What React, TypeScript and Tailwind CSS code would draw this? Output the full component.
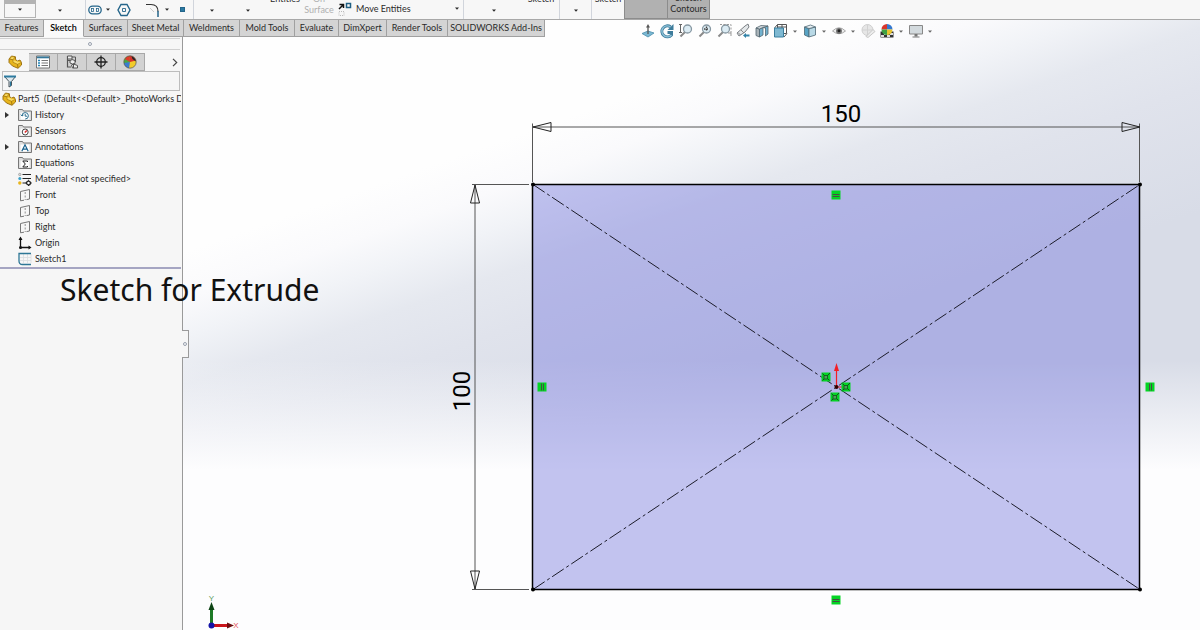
import React from "react";
import clsx from "clsx";

const tabs = [
  { name: "Features", width: "w-11" },
  { name: "Sketch", width: "w-10" },
  { name: "Surfaces", width: "w-11" },
  { name: "Sheet Metal", width: "w-14" },
  { name: "Weldments", width: "w-14" },
  { name: "Mold Tools", width: "w-[55px]" },
  { name: "Evaluate", width: "w-11" },
  { name: "DimXpert", width: "w-12" },
  { name: "Render Tools", width: "w-[61px]" },
  { name: "SOLIDWORKS Add-Ins", width: "w-[97px]" },
];

const Caret: React.FC<{ label: string; className?: string }> = ({ label, className }) => (
  <button type="button" aria-label={label} className={clsx("flex items-center justify-center shrink-0", className || "w-2 h-4")}>
    <svg width="4" height="3" viewBox="0 0 4 3"><path d="M0 0.5h4L2 2.8z" fill="currentColor" /></svg>
  </button>
);

const PartIcon = () => (
  <svg width="14" height="14" viewBox="0 0 14 14">
    <path d="M1 4 3.500 1l4 .8v2.700L9.500 6 12 5l1.500 2.500V10L10 13.300 4.500 11 1 7.500z" fill="#e8b51c" stroke="#94690a" strokeWidth=".9" />
    <path d="M1.500 4 3.800 1.500l3 .6L5 4.800v2.500l4.500 2L13 7.500" fill="#fbdc62" stroke="#a87c0e" strokeWidth=".7" />
    <path d="m9.500 9.300.5 3.500M5 4.800 1.500 4" stroke="#94690a" strokeWidth=".8" />
  </svg>
);

const BallIcon: React.FC<{ size: number }> = ({ size }) => (
  <svg width={size} height={size} viewBox="0 0 14 14">
    <circle cx="7" cy="7" r="6.200" fill="#f2cb2a" />
    <path d="M7 7 1.500 9.500A6.200 6.200 0 0 1 6 .9z" fill="#4aa843" />
    <path d="M7 7 6 .9A6.200 6.200 0 0 0 1.800 4z" fill="#e33a2b" />
    <path d="M7 7 6 .9a6.200 6.200 0 0 1 7 4.600z" fill="#d6332a" />
    <path d="M8.500 1.200a6.200 6.200 0 0 1 4.500 5.300L9.500 4z" fill="#222" />
    <path d="M7 7 1 8a6.200 6.200 0 0 0 5 5.200z" fill="#3b7bd0" />
    <circle cx="7" cy="7" r="6.200" fill="none" stroke="#555" strokeWidth=".7" />
  </svg>
);

const Folder: React.FC<{ children: React.ReactNode }> = ({ children }) => (
  <svg width="14" height="14" viewBox="0 0 14 14">
    <path d="M.5 12.500v-11h4l1 1.500h8v9.500z" fill="#dedede" stroke="#777" />
    <path d="M2.500 4.500h9v7h-9z" fill="#fff" />
    {children}
  </svg>
);

const PlaneIcon = () => (
  <svg width="14" height="14" viewBox="0 0 14 14" fill="none" stroke="#777">
    <path d="M2.500 3.500 11.500 1.500v9.500l-3 .6M6 12.200l-3.500.6V3.500" />
    <path d="M7.200 4v8" strokeWidth=".8" strokeDasharray="2 1.500" />
  </svg>
);

const tree = [
  {
    name: "History", open: true,
    icon: <Folder><path d="M4 8a3.200 3.200 0 1 1 3.200 3M4 8 2.800 6.700M4 8l1.500-1M7.200 6v2.200h2" fill="none" stroke="#2c6f91" /></Folder>,
  },
  {
    name: "Sensors",
    icon: <Folder><circle cx="7.200" cy="8" r="3" fill="#fff" stroke="#444" /><path d="m6.800 8.400 2-2" stroke="#d22" strokeWidth="1.400" /></Folder>,
  },
  {
    name: "Annotations", open: true,
    icon: <Folder><path d="M3.800 11.300 7 4.800l3.200 6.500M5 9.200h4" fill="none" stroke="#17618e" strokeWidth="1.200" /></Folder>,
  },
  {
    name: "Equations",
    icon: <Folder><path d="M9.500 6V5H4.800L7.300 8l-2.500 3h4.700v-1" fill="none" stroke="#222" /></Folder>,
  },
  {
    name: "Material <not specified>",
    icon: (
      <svg width="14" height="14" viewBox="0 0 14 14">
        <path d="M4.500 2.500H13M4.500 6.500H13M4.500 11H8" stroke="#222" strokeWidth="1.200" />
        <circle cx="1.800" cy="2.500" r="1.200" fill="#ddd" stroke="#888" strokeWidth=".6" />
        <circle cx="1.800" cy="6.500" r="1.500" fill="#3aa0c8" />
        <circle cx="1.800" cy="11" r="1.700" fill="#e8b51c" />
        <circle cx="10.500" cy="11" r="1.900" fill="#fff" stroke="#222" strokeWidth="1.300" />
        <path d="M10.500 7.800v1M10.500 13v1M7.500 11h1M12.600 11h1.200" stroke="#222" />
      </svg>
    ),
  },
  { name: "Front", icon: <PlaneIcon /> },
  { name: "Top", icon: <PlaneIcon /> },
  { name: "Right", icon: <PlaneIcon /> },
  {
    name: "Origin",
    icon: (
      <svg width="14" height="14" viewBox="0 0 14 14">
        <path d="M2.500 2v9.500H12" fill="none" stroke="#111" strokeWidth="1.300" />
        <path d="M.5 4 2.500.5l2 3.500zM10.500 9.500l3 2-3 2z" fill="#111" />
        <circle cx="2.500" cy="11.500" r="1.500" fill="#111" />
      </svg>
    ),
  },
  {
    name: "Sketch1",
    icon: (
      <svg width="14" height="14" viewBox="0 0 14 14" fill="none">
        <path d="M5.500 2v9M9.500 2v9M2 5.500h11M2 8.500h11M13 2v9" stroke="#d9dde0" strokeWidth=".8" />
        <path d="M13 1.500H1v7.500q0 3.500 3.500 3.500H13" stroke="#2e7796" strokeWidth="1.300" />
      </svg>
    ),
  },
];

const managerTabs = [
  { name: "FeatureManager", icon: <PartIcon /> },
  {
    name: "PropertyManager",
    icon: (
      <svg width="14" height="14" viewBox="0 0 14 14">
        <path d="M.5 1h13v12H.5z" fill="#fff" stroke="#777" />
        <path d="M1 1.500h12v1.800H1z" fill="#35789b" />
        <path d="M2 5.500h2M2 8h2M2 10.500h2" stroke="#2382b5" strokeWidth="1.500" />
        <path d="M5.500 5.500H12M5.500 8H12M5.500 10.500H12" stroke="#777" />
      </svg>
    ),
  },
  {
    name: "ConfigurationManager",
    icon: (
      <svg width="14" height="14" viewBox="0 0 14 14" fill="none" stroke="#555">
        <path d="M2.500 1v11.500M2.500 5.500H5M2.500 12H6" strokeWidth="1.200" />
        <path d="M2.500 1H7v3H2.500zM5 6l2-1.500 3 1v3L7.500 9 5 8zM6.500 10l2-1 4 1.500v2.500h-5z" fill="#eee" />
        <path d="M7 2h3.500v5M8.500 9v4" />
      </svg>
    ),
  },
  {
    name: "DimXpertManager",
    icon: (
      <svg width="14" height="14" viewBox="0 0 14 14" fill="none" stroke="#222" strokeWidth="1.300">
        <circle cx="7" cy="7" r="4.300" />
        <path d="M7 .5v13M.5 7h13" />
      </svg>
    ),
  },
  { name: "DisplayManager", icon: <BallIcon size={14} /> },
];

const Lens: React.FC<{ children?: React.ReactNode }> = ({ children }) => (
  <svg width="16" height="16" viewBox="0 0 16 16" fill="none">
    <path d="m7 9-4.500 4.500" stroke="#8a8a8a" strokeWidth="2" />
    <circle cx="9.500" cy="6" r="4" fill="#dcecf4" stroke="#8798a2" strokeWidth="1.300" />
    {children}
  </svg>
);

// view toolbar, "menu" puts a drop-down arrow after the icon
const viewTools = [
  {
    name: "Normal To",
    icon: (
      <svg width="16" height="16" viewBox="0 0 16 16">
        <path d="M2 10.500 8 8l6 2-6 4z" fill="#7bb9d4" stroke="#4a8dab" strokeWidth=".8" />
        <path d="M8 11V3" stroke="#555" strokeWidth="1.300" />
        <path d="m6 4.500 2-3.500 2 3.500z" fill="#555" />
      </svg>
    ),
  },
  {
    name: "Rotate",
    icon: (
      <svg width="16" height="16" viewBox="0 0 16 16" fill="none">
        <path d="M11.500 3.800A5.500 5.500 0 1 0 12.500 12V9.500H8.500" stroke="#3d7c9b" strokeWidth="3" />
        <path d="M11.500 3.800A5.500 5.500 0 1 0 12.500 12" stroke="#8cc1d8" strokeWidth="1.400" />
        <path d="M14.500 1v6h-6z" fill="#3d7c9b" />
      </svg>
    ),
  },
  { name: "Zoom Scale", icon: <Lens><path d="M2.500 1.500v8M1 1.500h3M1 9.500h3" stroke="#666" /></Lens> },
  { name: "Zoom to Fit", icon: <Lens><path d="M9.500 3.500v5M7 6h5" stroke="#444" strokeWidth="1.400" strokeDasharray="1.500 1" /></Lens> },
  { name: "Zoom to Area", icon: <Lens><path d="M4 1.500h11v9" stroke="#999" strokeDasharray="2 1.500" /><path d="M12 10h3v3" stroke="#999" /></Lens> },
  {
    name: "Previous View",
    icon: (
      <svg width="16" height="16" viewBox="0 0 16 16">
        <path d="M2 10 10 3l3-2 1 3-4 5-6 4z" fill="#e4e8ea" stroke="#7b8085" />
        <path d="m6 7 3 3M3 9.500l2.500 2.500" stroke="#888" />
        <path d="M8 12.500 11 10v1.500h3.500v2H11V15z" fill="#3383a8" />
      </svg>
    ),
  },
  {
    name: "Section View",
    icon: (
      <svg width="16" height="16" viewBox="0 0 16 16" stroke="#52656e" strokeWidth=".8">
        <path d="M2 5 5.500 6v8L2 12.500z" fill="#a9b3b8" />
        <path d="M5.500 6 9 4.500V12l-3.500 2z" fill="#72b2cf" />
        <path d="M9 4.500 14 3v8l-2.500 2V5z" fill="#72b2cf" />
        <path d="M2 5 7 2.500 14 3 9 4.500 5.500 6z" fill="#cfd6da" />
      </svg>
    ),
  },
  {
    name: "View Orientation", menu: true,
    icon: (
      <svg width="16" height="16" viewBox="0 0 16 16" fill="none" stroke="#555">
        <path d="M4.500 1.500h9v9h-9zM9 1.500v9M4.500 4h9" />
        <path d="m1.500 5 3-3.500M11 14l3-3.500" />
        <path d="M1.500 5h9v9h-9z" fill="#7fb9d2" stroke="#3b7f9e" />
      </svg>
    ),
  },
  {
    name: "Display Style", menu: true,
    icon: (
      <svg width="16" height="16" viewBox="0 0 16 16" stroke="#4c6773" strokeWidth=".8">
        <path d="M2.500 4 7 5.500V14l-4.500-2z" fill="#58a3c4" />
        <path d="m7 5.500 6.500-1.500v8L7 14z" fill="#b9d9e6" />
        <path d="M2.500 4 8.500 2l5 2L7 5.500z" fill="#e7eff3" />
      </svg>
    ),
  },
  {
    name: "Hide/Show Items", menu: true,
    icon: (
      <svg width="16" height="16" viewBox="0 0 16 16">
        <path d="M1.500 8Q8 1.500 14.500 8 8 13.500 1.500 8z" fill="#eee" stroke="#aaa" />
        <circle cx="8" cy="8" r="3" fill="#777" />
        <circle cx="8" cy="7.800" r="1.500" fill="#222" />
      </svg>
    ),
  },
  {
    name: "Edit Appearance",
    icon: (
      <svg width="16" height="16" viewBox="0 0 16 16">
        <circle cx="7.500" cy="7" r="5.500" fill="#e6e6e6" stroke="#d0d0d0" />
        <path d="M7.500 1.500v11M2 7h11" stroke="#d2d2d2" />
        <path d="m6 13.500 7-7 2 2-7 6z" fill="#ededed" stroke="#c8c8c8" />
      </svg>
    ),
  },
  {
    name: "Apply Scene", menu: true,
    icon: (
      <svg width="16" height="16" viewBox="0 0 16 16">
        <path d="M1.500 8.500h13v6h-13z" fill="#333" />
        <path d="M2 12h3v2H2zM8 12h3v2H8zM5 10h3v2H5zM11 10h3v2h-3z" fill="#ddd" />
        <path d="M8 6.500V1a5.500 5.500 0 0 1 5.500 5.500z" fill="#3478d0" />
        <path d="M8 6.500V1a5.500 5.500 0 0 0-5.500 5.500z" fill="#d9352b" />
        <path d="M8 6.500h5.500A5.500 5.500 0 0 1 8 12z" fill="#e7c42f" />
        <path d="M8 6.500V12a5.500 5.500 0 0 1-5.500-5.500z" fill="#3fa142" />
      </svg>
    ),
  },
  {
    name: "View Settings", menu: true,
    icon: (
      <svg width="16" height="16" viewBox="0 0 16 16">
        <path d="M1.500 2.500h13v8.500h-13z" fill="#d3dade" stroke="#888" />
        <path d="M6.500 11h3v2.500h-3z" fill="#777" />
        <path d="M4.500 14h7" stroke="#777" />
      </svg>
    ),
  },
];

const Relation: React.FC<{ x: number; y: number; type: "h" | "v" | "point" }> = ({ x, y, type }) => (
  <g transform={`translate(${x} ${y})`}>
    <path d="M-4.500-4.500h9v9h-9z" fill="#04d424" />
    {type === "h" && <path d="M-3.500-.5h7M-3.500 1.500h7" stroke="#4c4a46" />}
    {type === "v" && <path d="M-.5-3.500v7M1.500-3.500v7" stroke="#4c4a46" />}
    {type === "point" && (
      <>
        <path d="M-3.500 3.500 4-4M-3.500-3.500l2 2M3.500 3.500l-2-2" stroke="#134d1c" />
        <path d="M-2-1.500h3.500V2H-2z" fill="#4ba257" stroke="#134d1c" strokeWidth=".8" />
      </>
    )}
  </g>
);

const Model = () => (
  <svg className="absolute inset-0 w-full h-full" viewBox="0 20 1200 610" preserveAspectRatio="xMinYMin slice">
    <defs>
      <linearGradient id="sky" gradientUnits="userSpaceOnUse" x1="190" y1="250" x2="289" y2="532">
        <stop offset="0" stopColor="#fefefe" />
        <stop offset=".15" stopColor="#fafafc" />
        <stop offset=".27" stopColor="#f1f3f7" />
        <stop offset=".42" stopColor="#e5e8ef" />
        <stop offset=".6" stopColor="#e0e3ec" />
        <stop offset="1" stopColor="#d8dce7" />
      </linearGradient>
      <linearGradient id="floor" gradientUnits="userSpaceOnUse" x1="0" y1="360" x2="0" y2="470">
        <stop offset="0" stopColor="#fdfdfe" stopOpacity="0" />
        <stop offset="1" stopColor="#fdfdfe" />
      </linearGradient>
    </defs>
    <path d="M0 20h1200v610H0z" fill="url(#sky)" />
    <path d="M0 360h1200v270H0z" fill="url(#floor)" />

    <path d="M533 184.500h607v405H533z" fill="#7c7edf" fillOpacity=".46" />
    <g stroke="#1c1c2a" strokeDasharray="14 3 3 3">
      <path d="m533 184.500 607 405M533 589.500l607-405" />
    </g>
    <path d="M532.500 184.500h607v405h-607z" fill="none" stroke="#000" strokeWidth="1.500" />
    <g fill="#000">
      <circle cx="533" cy="184.500" r="2" />
      <circle cx="1140" cy="184.500" r="2" />
      <circle cx="533" cy="589.500" r="2" />
      <circle cx="1140" cy="589.500" r="2" />
    </g>

    {/* dimensions */}
    <g fill="none" stroke="#555">
      <path d="M532.500 182V123.500M1139.500 182V123.500M533 127h607" />
      <path d="M529 184.500h-57M529 589.500h-57M475 185v404" />
      <g stroke="#222">
        <path d="m533 127 18-4.500v9zM1140 127l-18-4.500v9z" />
        <path d="m475 185-4.500 18h9zM475 589l-4.500-18h9z" />
      </g>
    </g>
    <g fill="#000" textAnchor="middle" fontFamily="Roboto, sans-serif" fontSize="24">
      <text x="841" y="122">150</text>
      <text transform="translate(470 391) rotate(-90)">100</text>
    </g>

    <path d="M836.500 387v-19M837 387h7" stroke="#f31d25" strokeWidth="1.200" />
    <path d="m834 371 2.500-8 2.500 8z" fill="#f31d25" />
    <circle cx="836.500" cy="387" r="2" fill="#300" />
    <Relation x={836} y={195} type="h" />
    <Relation x={836} y={600} type="h" />
    <Relation x={542} y={387} type="v" />
    <Relation x={1150} y={387} type="v" />
    <Relation x={826} y={377} type="point" />
    <Relation x={846} y={387} type="point" />
    <Relation x={835} y={397} type="point" />

    {/* axis triad */}
    <path d="M211.500 625v-17" stroke="#1e7a26" strokeWidth="3" />
    <path d="m208.500 610 3-8 3 8z" fill="#0d4414" />
    <path d="M212 625.500h17" stroke="#c9141b" strokeWidth="3" />
    <path d="m227 622.500 7 3-7 3z" fill="#6e0d10" />
    <circle cx="211.500" cy="625.500" r="3" fill="#1414a8" />
    <g fontFamily="Liberation Sans, sans-serif" fontSize="8" textAnchor="middle">
      <text x="211.500" y="601" fill="#5b9c60">Y</text>
      <text x="236" y="628" fill="#e4545c">X</text>
    </g>
  </svg>
);

const Ribbon = () => (
  <header className="flex h-5 shrink-0 overflow-hidden bg-[#f7f7f7] border-b border-[#a8a8a8] leading-[11px]">
    <div className="flex w-[86px] shrink-0 border-r border-gray-300">
      <button type="button" aria-label="Sketch options" className="ml-1 w-8 h-[18px] border border-t-4 border-[#b4b4b4] flex justify-center pt-1">
        <svg width="4" height="3" viewBox="0 0 4 3"><path d="M0 0.500h4L2 2.800z" fill="#222" /></svg>
      </button>
      <Caret label="Dimension options" className="ml-5 w-2 h-5" />
    </div>
    <div className="flex w-[108px] shrink-0 items-center border-r border-gray-300 pl-0.5">
      <button type="button" aria-label="Slot">
        <svg width="14" height="10" viewBox="0 0 14 10" fill="none">
          <rect x=".8" y="1.200" width="12.400" height="7.600" rx="3.800" stroke="#24658a" strokeWidth="1.300" />
          <rect x="3.500" y="3.500" width="2" height="3" stroke="#24658a" strokeWidth=".8" />
          <rect x="8.500" y="3.500" width="2" height="3" stroke="#24658a" strokeWidth=".8" />
        </svg>
      </button>
      <Caret label="Slot options" className="w-3 h-4" />
      <button type="button" aria-label="Polygon" className="ml-[3px]">
        <svg width="14" height="14" viewBox="0 0 14 14" fill="none" stroke="#24658a">
          <path d="m4 1.500h6L13 7l-3 5.500H4L1 7z" strokeWidth="1.400" />
          <path d="M5.500 5.500h3v3h-3z" strokeWidth=".9" />
        </svg>
      </button>
      <button type="button" aria-label="Fillet" className="ml-[14px]">
        <svg width="16" height="16" viewBox="0 0 16 16" fill="none">
          <path d="M1 2.500h5q7 0 7 7" stroke="#333" strokeWidth="1.200" />
          <path d="M13 9v6" stroke="#24658a" strokeWidth="1.500" />
          <path d="m5 6 4 4" stroke="#ccc" />
        </svg>
      </button>
      <Caret label="Fillet options" className="w-3 h-4" />
      <button type="button" aria-label="Point" className="ml-[7px] size-[5px] bg-[#2b7aa3] border border-[#24658a]" />
    </div>
    <div className="flex w-[270px] shrink-0 border-r border-gray-300">
      <Caret label="Trim options" className="ml-[14px] w-2 h-5" />
      <Caret label="Convert options" className="ml-7 w-2 h-5" />
      <button type="button" className="ml-[17px] -mt-[22px] w-8">Entities</button>
      <button type="button" className="w-9 -mt-3 text-[#b0b0b0]">On<br />Surface</button>
      <button type="button" className="flex items-center ml-px -mt-0.5 whitespace-nowrap">
        <svg width="14" height="14" viewBox="0 0 14 14" fill="none" className="mr-1">
          <path d="m1 7 4-4M1.500 2.500H5.500V6" stroke="#111" strokeWidth="1.500" />
          <path d="M8.500 1.500h4v4h-4z" stroke="#1f5f83" strokeWidth="1.500" />
          <path d="M1 9.500h5v4H1z" stroke="#bbb" strokeDasharray="1 1" />
        </svg>
        Move Entities
      </button>
      <Caret label="Move options" className="ml-auto mr-0.5 w-2 h-4" />
    </div>
    <div className="flex w-24 shrink-0 border-r border-gray-300">
      <Caret label="Relations options" className="ml-[26px] w-2 h-5" />
      <button type="button" className="ml-auto mr-0.5 -mt-[22px] w-8">Sketch</button>
    </div>
    <div className="flex w-8 shrink-0 justify-center border-r border-gray-300">
      <Caret label="Snap options" className="w-2 h-5" />
    </div>
    <button type="button" className="w-8 shrink-0 -mt-[22px]">Sketch</button>
    <button type="button" aria-label="Instant2D" className="w-11 shrink-0 bg-[#b1b1b1] border border-t-0 border-[#8c8c8c]" />
    <button type="button" className="flex w-[42px] shrink-0 items-end justify-center bg-[#b1b1b1] border border-l-0 border-t-0 border-[#8c8c8c] pb-1">
      <span>Sketch<br />Contours</span>
    </button>
  </header>
);

const FeatureTree = () => (
  <aside className="relative flex flex-col flex-1 w-[183px] bg-[#f6f6f6] border-r border-[#9a9a9a]">
    <div className="flex h-3 mt-px mr-0.5 items-center justify-center border-y border-[#d0d0d0]">
      <span className="size-1 rounded-full border border-gray-400" />
    </div>
    <div className="flex mt-[3px] h-[18px] items-stretch">
      {managerTabs.map((tab, i) => (
        <button
          key={tab.name}
          type="button"
          aria-label={tab.name}
          className={clsx("flex items-center justify-center w-[29px]", i > 0 && "bg-[#d2d2d2] border border-l-0 border-[#a8a8a8]")}>
          {tab.icon}
        </button>
      ))}
      <button type="button" aria-label="More" className="ml-auto mr-0.5 w-2 flex items-center">
        <svg width="6" height="9" viewBox="0 0 6 9"><path d="m1 .8 3.700 3.700L1 8.200" fill="none" stroke="#444" strokeWidth="1.200" /></svg>
      </button>
    </div>
    <label className="flex items-center h-5 mx-0.5 border border-[#bdbdbd]">
      <svg width="14" height="14" viewBox="0 0 14 14" className="shrink-0">
        <path d="M1.500 2.500h11L8.500 7.500v4l-2.500 1.500V7.500z" fill="#dfe9ee" stroke="#44535c" />
        <path d="M1 1.500h12v2H1z" fill="#2c7ba0" />
        <path d="M7.500 7.500v4.500" stroke="#2c7ba0" />
      </svg>
      <input type="text" aria-label="Filter" className="flex-1 min-w-0 outline-none" />
    </label>
    <div className="flex items-center h-4 pl-0.5 mr-px overflow-hidden whitespace-pre">
      <span className="w-4 shrink-0"><PartIcon /></span>
      Part5  (Default&lt;&lt;Default&gt;_PhotoWorks Display State 1&gt;)
    </div>
    <ul className="mr-px border-b-2 border-[#a5a5c2]">
      {tree.map(item => (
        <li key={item.name} className="flex items-center h-4 whitespace-nowrap">
          <span className="w-[18px] pl-[5px]">
            {item.open ? <svg width="4" height="6" viewBox="0 0 4 6"><path d="m0 0 4 3-4 3z" fill="#333" /></svg> : null}
          </span>
          <span className="w-[17px]">{item.icon}</span>
          {item.name}
        </li>
      ))}
    </ul>
    <button type="button" aria-label="Collapse panel" className="absolute left-[182px] top-[293px] flex h-7 w-[7px] items-center justify-center border border-l-0 border-[#9a9a9a] bg-[#f6f6f6]">
      <span className="size-1 rounded-full border border-gray-400 shrink-0" />
    </button>
  </aside>
);

const App: React.FC = () => {
  return (
    <div className="flex flex-col h-screen overflow-hidden bg-white font-['Lato',sans-serif] text-[9px] text-[#2a2a2a]">
      <Ribbon />
      <main className="relative flex flex-col flex-1">
        <Model />
        <div className="relative flex h-[17px] shrink-0">
          <nav className="flex">
            {tabs.map(tab => (
              <button
                key={tab.name}
                type="button"
                className={clsx(
                  "shrink-0 whitespace-nowrap text-center border-r border-b border-[#a0a0a0]",
                  tab.width,
                  tab.name === "Sketch" ? "bg-[#fafafa] border-b-[#fafafa] font-semibold text-black" : "bg-[#d4d4d4]"
                )}>
                {tab.name}
              </button>
            ))}
          </nav>
          <div className="flex gap-[3px] ml-[95px] mt-[3px] text-[#666]">
            {viewTools.map(tool => (
              <React.Fragment key={tool.name}>
                <button type="button" aria-label={tool.name} className="size-4 shrink-0">{tool.icon}</button>
                {tool.menu ? <Caret label={`${tool.name} menu`} className="w-[5px] mr-0.5 h-4" /> : null}
              </React.Fragment>
            ))}
          </div>
        </div>
        <FeatureTree />
        <h1 className="absolute left-[60px] top-[249px] font-['Noto_Sans',sans-serif] text-[30px] leading-[42px] text-[#111] whitespace-nowrap">Sketch for Extrude</h1>
      </main>
    </div>
  );
};

export default App;
